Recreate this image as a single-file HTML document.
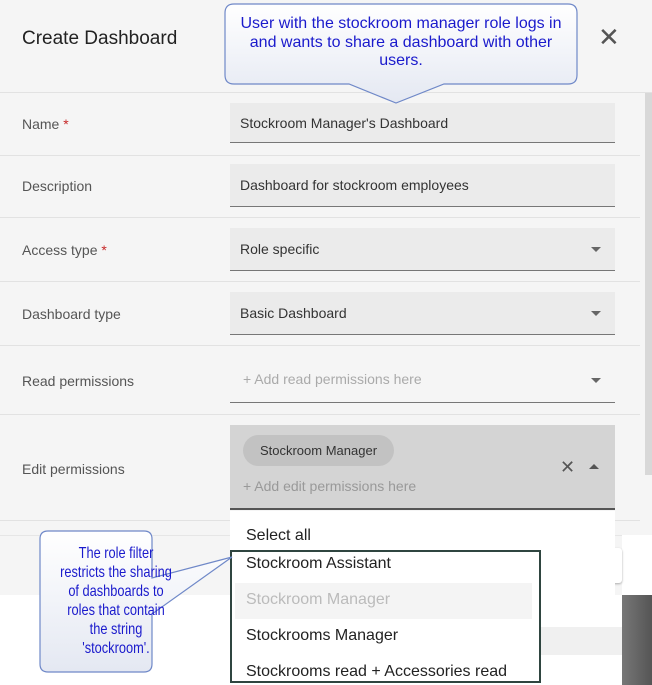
<!DOCTYPE html>
<html><head><style>
*{margin:0;padding:0;box-sizing:border-box}
body{width:652px;height:685px;position:relative;overflow:hidden;background:#fff;font-family:"Liberation Sans",Arial,sans-serif;}
.a{position:absolute}
.lbl{position:absolute;left:22px;font-size:14px;color:#555}
.req{color:#c62828}
.inp{position:absolute;left:230px;width:385px;background:#ebebeb;border-bottom:1px solid #777;font-size:14px;color:#333;padding-left:10px}
.hr{position:absolute;left:0;width:640px;height:1px;background:#e2e2e2}
.caret{position:absolute;right:14px;width:0;height:0;border-left:5px solid transparent;border-right:5px solid transparent;border-top:5px solid #666}
.opt{position:absolute;left:246px;font-size:16px;color:#222}
</style></head><body>
<div class="a" style="left:0;top:0;width:652px;height:535px;background:#f5f5f5"></div>
<div class="a" style="left:22px;top:28px;font-size:19px;color:#222">Create Dashboard</div>
<div class="a" style="left:598px;top:22px;font-size:26px;color:#555">✕</div>
<div class="a" style="left:0;top:92px;width:652px;height:1px;background:#e2e2e2"></div>
<div class="a" style="left:645px;top:93px;width:7px;height:382px;background:#d8d8d8"></div>

<div class="lbl" style="top:116px">Name <span class="req">*</span></div>
<div class="inp" style="top:103px;height:40px;line-height:40px">Stockroom Manager's Dashboard</div>
<div class="hr" style="top:155px"></div>
<div class="lbl" style="top:178px">Description</div>
<div class="inp" style="top:164px;height:43px;line-height:43px">Dashboard for stockroom employees</div>
<div class="hr" style="top:217px"></div>
<div class="lbl" style="top:242px">Access type <span class="req">*</span></div>
<div class="inp" style="top:228px;height:43px;line-height:43px">Role specific<div class="caret" style="top:19px"></div></div>
<div class="hr" style="top:281px"></div>
<div class="lbl" style="top:306px">Dashboard type</div>
<div class="inp" style="top:292px;height:43px;line-height:43px">Basic Dashboard<div class="caret" style="top:19px"></div></div>
<div class="hr" style="top:345px"></div>
<div class="lbl" style="top:373px">Read permissions</div>
<div class="inp" style="top:356px;height:47px;line-height:46px;background:#f5f5f5;color:#aaa;padding-left:13px">+ Add read permissions here<div class="caret" style="top:22px"></div></div>
<div class="hr" style="top:414px"></div>
<div class="lbl" style="top:461px">Edit permissions</div>
<div class="a" style="left:230px;top:425px;width:385px;height:85px;background:#d4d4d4;border-bottom:2px solid #555">
 <div class="a" style="left:13px;top:10px;width:151px;height:31px;border-radius:16px;background:#c2c2c2;font-size:13px;line-height:31px;text-align:center;color:#333">Stockroom Manager</div>
 <div class="a" style="left:13px;top:53px;font-size:14px;color:#999">+ Add edit permissions here</div>
 <div class="a" style="left:330px;top:32px;font-size:18px;color:#555">✕</div>
 <div class="a" style="left:359px;top:39px;width:0;height:0;border-left:5px solid transparent;border-right:5px solid transparent;border-bottom:5px solid #555"></div>
</div>
<div class="a" style="left:0;top:520px;width:640px;height:1px;background:#e2e2e2"></div>
<div class="a" style="left:0;top:535px;width:622px;height:60px;background:#f5f5f5;border-top:1px solid #e6e6e6"></div>
<div class="a" style="left:600px;top:548px;width:22px;height:35px;background:#fff;border-radius:3px;box-shadow:0 1px 2px #aaa"></div>
<div class="a" style="left:622px;top:595px;width:30px;height:90px;background:linear-gradient(90deg,#777,#555)"></div>

<div class="a" style="left:230px;top:511px;width:385px;height:174px;background:#fff"></div>
<div class="a" style="left:235px;top:583px;width:297px;height:36px;background:#f4f4f4"></div>
<div class="a" style="left:540px;top:627px;width:82px;height:28px;background:#f0f0f0"></div>
<div class="opt" style="top:527px">Select all</div>
<div class="opt" style="top:555px">Stockroom Assistant</div>
<div class="opt" style="top:591px;color:#bbb">Stockroom Manager</div>
<div class="opt" style="top:627px">Stockrooms Manager</div>
<div class="opt" style="top:663px">Stockrooms read + Accessories read</div>
<div class="a" style="left:230px;top:550px;width:311px;height:133px;border:2px solid #2f4540"></div>

<svg class="a" style="left:0;top:0" width="652" height="685">
<defs><linearGradient id="g" x1="0" y1="0" x2="0" y2="1"><stop offset="0" stop-color="#ffffff"/><stop offset="1" stop-color="#e4e8f2"/></linearGradient></defs>
<path d="M234,4 H568 Q577,4 577,13 V75 Q577,84 568,84 H444 L396,103 L349,84 H234 Q225,84 225,75 V13 Q225,4 234,4 Z" fill="url(#g)" stroke="#6f88c8" stroke-width="1.2"/>
<path d="M48,531 H144 Q152,531 152,539 V578 L232,557 L152,614 V664 Q152,672 144,672 H48 Q40,672 40,664 V539 Q40,531 48,531 Z" fill="url(#g)" stroke="#6f88c8" stroke-width="1.2"/>
</svg>
<div class="a" style="left:228px;top:15px;width:346px;text-align:center;font-size:16px;line-height:18.5px;color:#1a1acc">User with the stockroom manager role logs in and wants to share a dashboard with other users.</div>
<div class="a" style="left:24px;top:544px;width:184px;text-align:center;font-size:16px;line-height:19px;color:#1a1acc;transform:scaleX(0.8);transform-origin:92px 0">The role filter<br>restricts the sharing<br>of dashboards to<br>roles that contain<br>the string<br>'stockroom'.</div>
</body></html>
